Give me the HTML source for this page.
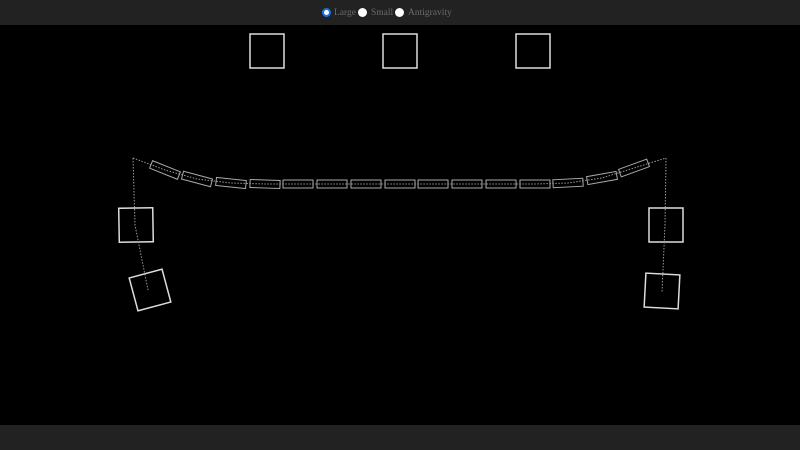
<!DOCTYPE html>
<html><head><style>
html,body{margin:0;padding:0;width:800px;height:450px;background:#000;overflow:hidden}
.top{position:absolute;left:0;top:0;width:800px;height:25px;background:#222}
.bot{position:absolute;left:0;top:425px;width:800px;height:25px;background:#222}
.r{position:absolute;top:8px;width:9px;height:9px;border-radius:50%;background:#fff;box-sizing:border-box}
.r.on{border:2.5px solid #1a73e8;background:#fff}
.t{position:absolute;top:8px;font:9.5px "Liberation Serif",serif;color:#6a6a6a}
svg{position:absolute;left:0;top:0}
</style></head><body>
<div class="top">
<div class="r on" style="left:322px"></div><span class="t" style="left:334px">Large</span>
<div class="r" style="left:358px"></div><span class="t" style="left:371px">Small</span>
<div class="r" style="left:395px"></div><span class="t" style="left:408px">Antigravity</span>
</div>
<div class="bot"></div>
<svg width="800" height="450">
<g fill="none" stroke="#ddd" stroke-width="1.5">
<rect x="250" y="34" width="34" height="34"/>
<rect x="383" y="34" width="34" height="34"/>
<rect x="516" y="34" width="34" height="34"/>
<rect x="119" y="208" width="34" height="34" transform="rotate(-1 136 225)"/>
<rect x="133" y="273" width="34" height="34" transform="rotate(-15 150 290)"/>
<rect x="649" y="208" width="34" height="34"/>
<rect x="645" y="274" width="34" height="34" transform="rotate(3 662 291)"/>
</g>
<g fill="none" stroke="#999" stroke-width="1" stroke-dasharray="1.5 1.5">
<polyline points="133,158 135,225 148,290"/>
<polyline points="666,158 665,225 662,292"/>
<polyline points="133,158 165,170 197,179 231,183 265,184 535,184 568,183 602,178 634,168 666,158"/>
</g>
<g fill="none" stroke="#aaa" stroke-width="1">
<rect x="-15" y="-4" width="30" height="8" transform="translate(165,170) rotate(22)"/>
<rect x="-15" y="-4" width="30" height="8" transform="translate(197,179) rotate(15)"/>
<rect x="-15" y="-4" width="30" height="8" transform="translate(231,183) rotate(6)"/>
<rect x="-15" y="-4" width="30" height="8" transform="translate(265,184) rotate(2)"/>
<rect x="-15" y="-4" width="30" height="8" transform="translate(298,184)"/>
<rect x="-15" y="-4" width="30" height="8" transform="translate(332,184)"/>
<rect x="-15" y="-4" width="30" height="8" transform="translate(366,184)"/>
<rect x="-15" y="-4" width="30" height="8" transform="translate(400,184)"/>
<rect x="-15" y="-4" width="30" height="8" transform="translate(433,184)"/>
<rect x="-15" y="-4" width="30" height="8" transform="translate(467,184)"/>
<rect x="-15" y="-4" width="30" height="8" transform="translate(501,184)"/>
<rect x="-15" y="-4" width="30" height="8" transform="translate(535,184)"/>
<rect x="-15" y="-4" width="30" height="8" transform="translate(568,183) rotate(-3)"/>
<rect x="-15" y="-4" width="30" height="8" transform="translate(602,178) rotate(-10)"/>
<rect x="-15" y="-4" width="30" height="8" transform="translate(634,168) rotate(-20)"/>
</g>
</svg>
</body></html>
